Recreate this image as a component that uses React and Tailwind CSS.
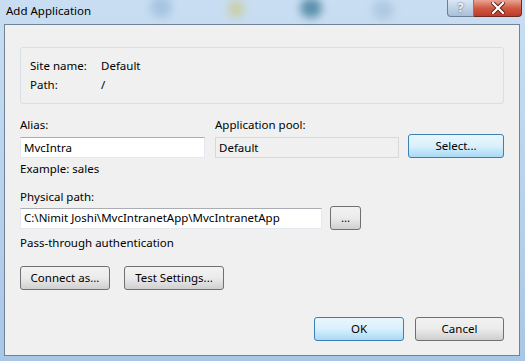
import React from 'react';

const font = { fontFamily: '"Noto Sans", "Open Sans", sans-serif' };

const WinButton = ({ children, className = '', blue = false }) => (
  <button
    className={`flex items-center justify-center h-[24px] rounded-[3px] border text-[11.5px] text-black ${
      blue
        ? 'border-[#3c7fb1] bg-gradient-to-b from-[#eaf6fd] via-[#d9f0fc] to-[#a7d9f5]'
        : 'border-[#707070] bg-gradient-to-b from-[#f2f2f2] via-[#ebebeb] to-[#cfcfcf]'
    } ${className}`}
  >
    {children}
  </button>
);

const TextBox = ({ value, className = '', readOnly = false }) => (
  <div
    className={`h-[21px] flex items-center px-[3px] border text-[11.5px] text-black ${
      readOnly
        ? 'bg-[#f0f0f0] border-[#d8d8d8]'
        : 'bg-white border-[#e3e9ef] border-t-[#abadb3]'
    } ${className}`}
  >
    {value}
  </div>
);

export default function App() {
  return (
    <div
      className="w-[525px] h-[361px] relative overflow-hidden bg-gradient-to-b from-[#c9def2] via-[#b9d3ee] to-[#a8c6e6] text-[11.5px] text-black"
      style={font}
    >
      {/* blurred desktop behind the glass */}
      <div className="absolute left-[150px] top-[-4px] w-[22px] h-[22px] rounded-full bg-[#8fb3d6] blur-[4px] opacity-60" />
      <div className="absolute left-[228px] top-[0px] w-[16px] h-[18px] rounded-full bg-[#c9c98a] blur-[4px] opacity-70" />
      <div className="absolute left-[300px] top-[-2px] w-[22px] h-[20px] rounded-full bg-[#2f6f8f] blur-[4px] opacity-70" />
      <div className="absolute left-[372px] top-[0px] w-[22px] h-[20px] rounded-full bg-[#9fbcd8] blur-[4px] opacity-60" />

      {/* title bar */}
      <div className="h-[24px] flex items-start relative">
        <span className="pl-[6px] pt-[3px] text-[11.5px] text-black leading-[16px]">Add Application</span>
        <div className="ml-auto mr-[3px] flex">
          <div className="w-[27px] h-[17px] rounded-bl-[4px] border border-t-0 border-[#6b7f96] bg-gradient-to-b from-[#dbe7f4] to-[#a9bfd8] flex items-center justify-center text-[12px] font-bold text-[#f4f8fc] leading-none">
            <span className="[text-shadow:0_0_2px_#304860]">?</span>
          </div>
          <div className="w-[48px] h-[17px] rounded-br-[4px] border border-t-0 border-l-0 border-[#6b2a22] bg-gradient-to-b from-[#e8a493] via-[#cf5a44] to-[#c0392b] flex items-center justify-center">
            <svg width="14" height="12" viewBox="0 0 14 12">
              <path d="M2 1 L12 11 M12 1 L2 11" stroke="#5a1a12" strokeWidth="4" strokeLinecap="square" />
              <path d="M2 1 L12 11 M12 1 L2 11" stroke="#ffffff" strokeWidth="2.2" strokeLinecap="square" />
            </svg>
          </div>
        </div>
      </div>

      {/* client area */}
      <div className="ml-[4px] mr-[5px] h-[332px] border border-[#6f8296] bg-[#f0f0f0] pl-[15px] pr-[15px] flex flex-col">
        {/* site info group */}
        <div className="mt-[22px] h-[57px] border border-[#d5dfe5] rounded-[3px] pl-[9px] pt-[10px] flex flex-col gap-[3px]">
          <div className="flex h-[16px] items-center">
            <span className="w-[71px]">Site name:</span>
            <span>Default</span>
          </div>
          <div className="flex h-[16px] items-center">
            <span className="w-[71px]">Path:</span>
            <span>/</span>
          </div>
        </div>

        {/* alias / pool */}
        <div className="mt-[13px] grid grid-cols-[185px_184px_96px] gap-x-[10px] items-start">
          <span className="h-[16px] leading-[16px]">Alias:</span>
          <span className="h-[16px] leading-[16px]">Application pool:</span>
          <span />
          <TextBox value="MvcIntra" className="mt-[4px]" />
          <TextBox value="Default" readOnly className="mt-[4px]" />
          <WinButton blue className="mt-[1px] w-[96px] -ml-[1px]">Select...</WinButton>
        </div>

        <span className="mt-[3px] h-[16px] leading-[16px]">Example: sales</span>

        <span className="mt-[12px] h-[16px] leading-[16px]">Physical path:</span>
        <div className="mt-[1px] flex items-center gap-[8px]">
          <TextBox value="C:\Nimit Joshi\MvcIntranetApp\MvcIntranetApp" className="w-[302px]" />
          <WinButton className="w-[31px] text-[10px] !items-end pb-[6px] leading-none">...</WinButton>
        </div>

        <span className="mt-[5px] h-[16px] leading-[16px]">Pass-through authentication</span>

        <div className="mt-[15px] flex gap-[14px]">
          <WinButton className="w-[90px]">Connect as...</WinButton>
          <WinButton className="w-[100px]">Test Settings...</WinButton>
        </div>

        <div className="mt-[27px] flex justify-end gap-[11px]">
          <WinButton blue className="w-[90px]">OK</WinButton>
          <WinButton className="w-[89px]">Cancel</WinButton>
        </div>
      </div>
    </div>
  );
}
